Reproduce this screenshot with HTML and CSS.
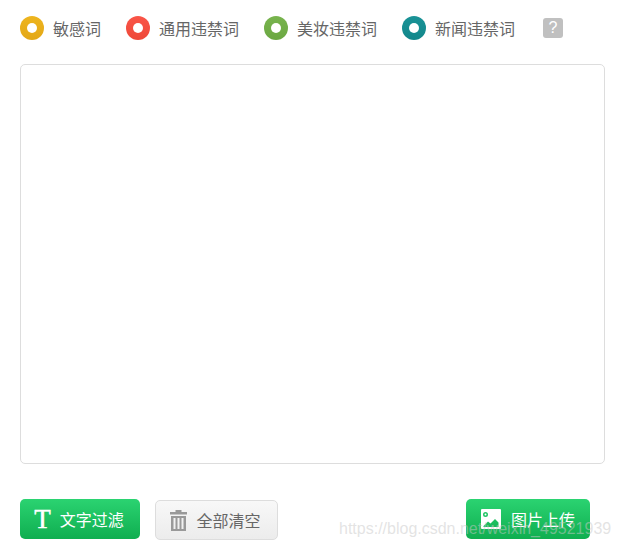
FILE: index.html
```html
<!DOCTYPE html>
<html lang="zh-CN">
<head>
    <meta charset="UTF-8">
    <title>文字过滤</title>
    <link rel="stylesheet" href="styles.css">
</head>
<body>
    <div class="filter-box">
        <div class="legend">
            <div class="legend-item"><span class="dot dot-yellow"></span>敏感词</div>
            <div class="legend-item"><span class="dot dot-red"></span>通用违禁词</div>
            <div class="legend-item"><span class="dot dot-green"></span>美妆违禁词</div>
            <div class="legend-item"><span class="dot dot-teal"></span>新闻违禁词</div>
            <span class="help">?</span>
        </div>

        <textarea class="text-input"></textarea>

        <div class="actions">
            <button class="btn btn-green btn-filter"><span class="t-icon">T</span>文字过滤</button>
            <button class="btn btn-gray">
                <svg class="icon" width="17" height="21" viewBox="0 0 17 21">
                    <path fill="#999" fill-rule="evenodd" d="M5.500 0h6v2H17v2.500H0V2h5.500zM1 6h15v15H1zM3.500 8v11h2V8zM7.500 8v11h2V8zM11.500 8v11h2V8z"/>
                </svg>
                全部清空
            </button>
            <button class="btn btn-green btn-upload">
                <svg class="icon" width="20" height="20" viewBox="0 0 20 20">
                    <path fill="#fff" fill-rule="evenodd" d="M1 0h18a1 1 0 0 1 1 1v18a1 1 0 0 1-1 1H1a1 1 0 0 1-1-1V1a1 1 0 0 1 1-1zM4.500 3a2.500 2.500 0 1 0 0 5 2.500 2.500 0 0 0 0-5zM4.500 4.500a1 1 0 1 1 0 2 1 1 0 0 1 0-2zM14 10l-4.500 4.500L7 12.500 2.500 17v1h15v-4.500z"/>
                </svg>
                图片上传
            </button>
        </div>
    </div>
    <div class="watermark">https://blog.csdn.net/weixin_49521939</div>
</body>
</html>
```

FILE: styles.css
```css
html, body {
    margin: 0;
    height: 547px;
    overflow: hidden;
    background-color: #fff;
}
body {
    position: relative;
    font-family: "Noto Sans CJK SC", "Liberation Sans", sans-serif;
    font-size: 16px;
    color: #666;
}
.filter-box {
    padding: 16px 15px 0 20px;
}
.legend {
    display: flex;
    align-items: center;
    height: 24px;
    gap: 25px;
}
.legend-item {
    display: flex;
    align-items: center;
    gap: 9px;
    line-height: 24px;
}
.dot {
    display: flex;
    align-items: center;
    justify-content: center;
    width: 24px;
    height: 24px;
    border-radius: 50%;
}
.dot::after {
    content: "";
    width: 10px;
    height: 10px;
    border-radius: 50%;
    background-color: #fff;
}
.dot-yellow { background: linear-gradient(#eeb51f, #e3a716); }
.dot-red { background: linear-gradient(#fa5548, #ee4838); }
.dot-green { background: linear-gradient(#78b44e, #6ba742); }
.dot-teal { background: linear-gradient(#1a9397, #12868a); }
.help {
    width: 20px;
    height: 20px;
    margin-left: 3px;
    border-radius: 3px;
    background-color: #c0c0c0;
    color: #fff;
    font-family: "Liberation Sans", sans-serif;
    font-size: 16px;
    line-height: 20px;
    text-align: center;
}
.text-input {
    display: block;
    box-sizing: border-box;
    width: 585px;
    height: 400px;
    margin: 24px 0 0;
    border: 1px solid #ddd;
    border-radius: 5px;
    outline: none;
    resize: none;
}
.actions {
    display: flex;
    align-items: flex-start;
    width: 570px;
    margin-top: 35px;
}
.btn {
    display: flex;
    align-items: center;
    justify-content: center;
    box-sizing: border-box;
    height: 40px;
    padding: 0;
    border: none;
    border-radius: 5px;
    font-family: inherit;
    font-size: 16px;
}
.btn-green {
    background: linear-gradient(#2bd371, #0fae50);
    color: #fff;
}
.btn-filter {
    width: 120px;
    gap: 9px;
    padding-right: 2px;
}
.t-icon {
    font-family: "Liberation Serif", serif;
    font-size: 27px;
    line-height: 40px;
    -webkit-text-stroke: 0.5px #fff;
}
.btn-gray {
    width: 123px;
    margin: 1px 0 0 15px;
    gap: 9px;
    padding-right: 2px;
    border: 1px solid #ddd;
    background: linear-gradient(#f8f8f8, #ececec);
    color: #666;
}
.btn-upload {
    width: 124px;
    margin-left: auto;
    gap: 10px;
}
.watermark {
    position: absolute;
    left: 339px;
    top: 519px;
    font-family: "Liberation Sans", sans-serif;
    font-size: 16px;
    line-height: 20px;
    color: rgba(200, 200, 200, 0.5);
    white-space: nowrap;
}
```
